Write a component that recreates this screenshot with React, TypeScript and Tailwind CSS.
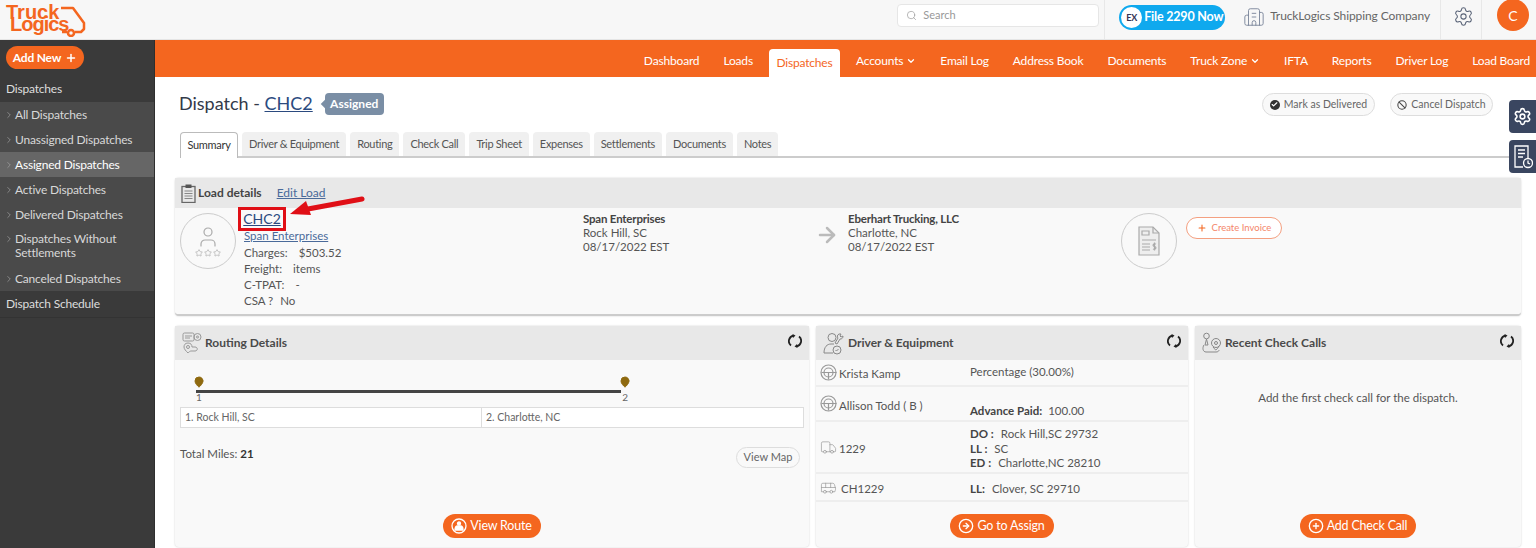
import { Building2, Check, ChevronDown, ChevronRight, Ban, Plus, Search, Settings, ArrowRight, MapPin, User, Star, Truck, Bus, CircleArrowRight, CirclePlus } from "lucide-react"

const navItems = [
  { label: "Dashboard" },
  { label: "Loads" },
  { label: "Dispatches", active: true },
  { label: "Accounts", menu: true },
  { label: "Email Log" },
  { label: "Address Book" },
  { label: "Documents" },
  { label: "Truck Zone", menu: true },
  { label: "IFTA" },
  { label: "Reports" },
  { label: "Driver Log" },
  { label: "Load Board" },
]

const sideItems = [
  { label: "All Dispatches" },
  { label: "Unassigned Dispatches" },
  { label: "Assigned Dispatches", active: true },
  { label: "Active Dispatches" },
  { label: "Delivered Dispatches" },
  { label: "Dispatches Without Settlements", tall: true },
  { label: "Canceled Dispatches" },
]

const tabs = ["Driver & Equipment", "Routing", "Check Call", "Trip Sheet", "Expenses", "Settlements", "Documents", "Notes"]

function Sync() {
  return (
    <svg width="14" height="14" viewBox="0 0 14 14" fill="none" stroke="#222" strokeWidth="1.8">
      <path d="M3 11.5A5.6 5.6 0 0 1 5.5 1.6" />
      <path d="M11 2.5A5.6 5.6 0 0 1 8.5 12.4" />
      <path d="M4.5 0 7.5 1.6 5 4Z" fill="#222" stroke="none" />
      <path d="M9.5 14 6.5 12.4 9 10Z" fill="#222" stroke="none" />
    </svg>
  )
}

function Wheel() {
  return (
    <svg width="17" height="17" viewBox="0 0 17 17" fill="none" stroke="#999" strokeWidth="1.2" className="shrink-0">
      <circle cx="8.5" cy="8.5" r="7.5" />
      <circle cx="8.5" cy="8.5" r="4.5" />
      <path d="M1.5 8.5h15M8.5 8.5v7" />
    </svg>
  )
}

function RoutingIcon() {
  return (
    <svg width="20" height="22" viewBox="0 0 20 22" fill="none" stroke="#999" strokeWidth="1">
      <rect x="1" y="1" width="11" height="8" rx="1.5" />
      <path d="M3 4h7M3 6h5" />
      <circle cx="15.5" cy="5" r="3.5" />
      <circle cx="15.5" cy="5" r="1" />
      <path d="M6 11c-3 0-4 2-4 4 0 2 2 4 4 6 1-1 2-2 3-2h4c3 0 3-4 0-4h-3c0-2-1-4-4-4Z" />
      <circle cx="6" cy="15" r="1.5" />
    </svg>
  )
}

function DriverIcon() {
  return (
    <svg width="22" height="23" viewBox="0 0 22 23" fill="none" stroke="#888" strokeWidth="1">
      <circle cx="9" cy="5.5" r="4" />
      <path d="M1 21c0-6 3-9 7-9h3" />
      <path d="M1 21h9" />
      <path d="M16 2c-2 1-2 3-1 4l-3 5 2 1 3-5c2 0 3-1 3-3l-2 1-1-1 1-2Z" />
      <circle cx="14" cy="18" r="4" />
      <path d="M12.5 18l1 1 2-2" />
    </svg>
  )
}

function CheckCallIcon() {
  return (
    <svg width="20" height="22" viewBox="0 0 20 22" fill="none" stroke="#888" strokeWidth="1">
      <circle cx="4.5" cy="4" r="2.8" />
      <path d="M4.5 7 3 13h3Z" />
      <circle cx="14" cy="11" r="4.5" />
      <circle cx="14" cy="11" r="1.5" />
      <path d="M11 15c2 2 2 3 3 3 1-1 2-2 3-4" />
      <path d="M2 13c-2 3-1 7 2 7h10c2 0 3-1 3-2" />
    </svg>
  )
}

function Clipboard() {
  return (
    <svg width="15" height="19" viewBox="0 0 15 19" className="shrink-0">
      <rect x="1" y="2.5" width="13" height="16" fill="#e8e8e8" stroke="#666" strokeWidth="1.3" />
      <rect x="4.5" y="0.5" width="6" height="3.5" fill="#555" />
      <path d="M3.5 7h8M3.5 9.5h8M3.5 12h8M3.5 14.5h8" stroke="#888" strokeWidth="1" />
    </svg>
  )
}

function InvoiceIcon() {
  return (
    <svg width="24" height="30" viewBox="0 0 24 30" fill="none" stroke="#aaa" strokeWidth="1.2">
      <path d="M2 1h14l6 6v22H2Z" fill="#eee" />
      <path d="M16 1v6h6" />
      <path d="M5 5h7v4H5Z" />
      <path d="M5 14h14M5 18h8M5 21h8M5 24h8" />
      <path d="M19 18c-3-1-4 2-1.500 2.500s1.500 3.500-1.500 2.500M17.500 16.500v8" />
    </svg>
  )
}

function LogIcon() {
  return (
    <svg width="20" height="24" viewBox="0 0 20 24" fill="none" stroke="#fff" strokeWidth="1.3">
      <path d="M10 22H2V1h13v12" />
      <path d="M5 5h7M5 8.500h7M5 12h5" />
      <circle cx="15" cy="18" r="4.500" fill="#3a4660" />
      <path d="M15 15.500V18l2 1" />
    </svg>
  )
}

function Logo() {
  return (
    <div className="relative w-[90px] h-[39px] shrink-0 pt-[4px] text-[#f4661f] font-bold font-['Liberation_Sans',sans-serif]">
      <div className="pl-[6px] text-[20px] leading-[16px]">Truck</div>
      <div className="pl-[10px] -mt-[4px] text-[20px] leading-[16px] tracking-[-1px]">Logics</div>
      <svg className="absolute left-[52px] top-[5px]" width="34" height="32" viewBox="0 0 34 32" fill="none" stroke="#f4661f" strokeWidth="2.500" strokeLinejoin="round">
        <path d="M9 3h12l11 15v6l-3 3h-6M15 27h-5" />
        <circle cx="19" cy="28" r="3" />
      </svg>
    </div>
  )
}

function OrangeButton({ icon, label }: { icon: React.ReactNode; label: string }) {
  return (
    <button className="h-6 rounded-full bg-[#f4661f] text-white text-[12.5px] tracking-[-0.2px] flex items-center gap-[3px] pl-2 pr-[9px]">
      {icon}
      {label}
    </button>
  )
}

function PanelHead({ icon, title }: { icon: React.ReactNode; title: string }) {
  return (
    <div className="h-[34px] bg-[#e8e8e8] flex items-center justify-between pl-[7px] pr-[7px]">
      <div className="flex items-center gap-[3px] text-[12px] font-bold text-[#4a4a4a]">
        {icon}
        {title}
      </div>
      <div className="-mt-[5px]">
        <Sync />
      </div>
    </div>
  )
}

export default function App() {
  return (
    <div className="relative w-[1536px] h-[548px] overflow-hidden bg-white text-[#555] font-['Lato','Liberation_Sans',sans-serif]">
      {/* top bar */}
      <header className="h-[40px] bg-[#f7f7f7] border-b border-[#e5e5e5] flex items-start">
        <Logo />
        <div className="ml-auto mt-[4px] w-[202px] h-[23px] bg-white border border-[#e6e6e6] rounded flex items-center gap-[6px] pl-[8px] text-[11px] text-[#999]">
          <Search size={11} strokeWidth={1.5} />
          Search
        </div>
        <div className="ml-[5px] w-px h-[39px] bg-[#e8e8e8]" />
        <button className="ml-[14px] mt-[5px] w-[106px] h-[25px] rounded-full bg-[#0fa9ee] text-white text-[12.5px] tracking-[-0.2px] font-bold whitespace-nowrap flex items-center gap-[2px] pl-[2px]">
          <span className="w-[21px] h-[21px] rounded-full bg-white text-[#335] text-[9px] font-bold flex items-center justify-center">EX</span>
          File 2290 Now
        </button>
        <Building2 className="ml-[18px] mt-[6px] text-[#7a8499]" size={22} strokeWidth={1} />
        <span className="ml-[5px] mt-[7px] text-[12px] tracking-[-0.1px] leading-[18px] whitespace-nowrap text-[#666]">TruckLogics Shipping Company</span>
        <div className="ml-[10px] w-px h-[39px] bg-[#e8e8e8]" />
        <Settings className="ml-[12px] mt-[6px] text-[#5a6478]" size={21} strokeWidth={1.2} />
        <div className="ml-[7px] w-px h-[39px] bg-[#e8e8e8]" />
        <div className="ml-[15px] mr-[7px] -mt-px w-[32px] h-[32px] rounded-full bg-[#f4661f] text-white text-[14px] flex items-center justify-center">C</div>
      </header>

      <div className="flex h-[508px]">
        {/* sidebar */}
        <aside className="w-[155px] shrink-0 bg-[#3a3a3a] text-[#ddd] text-[12px] tracking-[-0.2px] border-r border-[#2e2e2e]">
          <div className="h-[36px] pt-[6px] pl-[6px]">
            <button className="w-[78px] h-[23px] rounded-full bg-[#f4661f] text-white text-[12px] font-bold flex items-center justify-center gap-[4px]">
              Add New
              <Plus size={12} strokeWidth={3} />
            </button>
          </div>
          <div className="h-[26px] flex items-center pl-[6px]">Dispatches</div>
          <div className="bg-[#4a4a4a] h-[189px]">
            {sideItems.map((item) => (
              <div
                key={item.label}
                className={`flex pl-[4px] pr-2 ${item.tall ? "items-start h-[39px] pt-[5px] leading-[14px]" : "items-center h-[25px]"} ${item.active ? "bg-[#666] text-white" : "text-[#d8d8d8]"}`}
              >
                <ChevronRight className={`shrink-0 text-[#aaa] mr-px ${item.tall ? "mt-[2px]" : ""}`} size={10} strokeWidth={1.5} />
                <span>{item.label}</span>
              </div>
            ))}
          </div>
          <div className="h-[27px] flex items-center pl-[6px] border-b border-[#333]">Dispatch Schedule</div>
        </aside>

        <div className="flex-1 min-w-0">
          {/* orange nav */}
          <nav className="h-[37px] bg-[#f4661f] flex items-end justify-end pr-[6px] gap-[24px] text-white text-[12px] tracking-[-0.18px]">
            {navItems.map((n) =>
              n.active ? (
                <div key={n.label} className="h-[28px] -mx-[8px] w-[71px] bg-white text-[#f4661f] rounded-t flex items-center justify-center">
                  {n.label}
                </div>
              ) : (
                <div key={n.label} className="h-[37px] flex items-center gap-[3px] pt-[4px]">
                  {n.label}
                  {n.menu && <ChevronDown size={10} strokeWidth={3} />}
                </div>
              ),
            )}
          </nav>

          <main className="pl-[20px] pr-[15px]">
            {/* title row */}
            <div className="h-[55px] flex items-center pl-[4px] pr-[28px]">
              <h1 className="-mt-[3px] text-[18px] text-[#333a4a]">
                Dispatch - <a className="underline text-[#2b4a7f]">CHC2</a>
              </h1>
              <span className="ml-[12px] -mt-px relative h-[22px] w-[59px] rounded-sm bg-[#7a8ea5] text-white text-[12px] font-bold flex items-center justify-center">
                <span className="absolute -left-[3px] top-[8px] w-[6px] h-[6px] rotate-45 bg-[#7a8ea5]" />
                Assigned
              </span>
              <button className="ml-auto h-[23px] w-[113px] rounded-full border border-[#ddd] bg-[#f9f9f9] text-[10.5px] text-[#666] flex items-center justify-center gap-[4px]">
                <span className="w-[10px] h-[10px] rounded-full bg-[#333] text-white flex items-center justify-center">
                  <Check size={7} strokeWidth={4} />
                </span>
                Mark as Delivered
              </button>
              <button className="ml-[15px] h-[23px] w-[103px] rounded-full border border-[#ddd] bg-[#f9f9f9] text-[10.5px] text-[#666] flex items-center justify-center gap-[4px]">
                <Ban size={10} strokeWidth={2.5} className="text-[#444]" />
                Cancel Dispatch
              </button>
            </div>

            {/* tabs */}
            <div className="h-[26px] ml-[5px] -mr-[15px] border-b-2 border-[#ccc] flex items-end gap-[4px] text-[11px] tracking-[-0.3px] text-[#555]">
              <div className="h-[26px] -mb-[2px] w-[58px] bg-white border border-[#bbb] border-b-0 rounded-t text-[#333] flex items-center justify-center">Summary</div>
              {tabs.map((t) => (
                <div key={t} className="h-[24px] px-[7px] bg-[#f0f0f0] rounded-t flex items-center">{t}</div>
              ))}
            </div>

            {/* load details */}
            <section className="mt-[20px] h-[138px] bg-[#f9f9f9] rounded-sm border-b-2 border-[#ccc] shadow-[0_0_2px_#ccc] relative">
              <div className="h-[30px] bg-[#e8e8e8] flex items-center pl-[6px] text-[12px]">
                <Clipboard />
                <span className="ml-[2px] font-bold text-[#444]">Load details</span>
                <a className="ml-[15px] underline text-[#4a6a9a]">Edit Load</a>
              </div>
              <div className="flex items-start pl-[5px]">
                <div className="mt-[5px] w-[56px] h-[56px] shrink-0 rounded-full border border-[#ccc] flex flex-col items-center justify-center text-[#aaa]">
                  <User size={24} strokeWidth={1.2} />
                  <div className="flex gap-[1px]">
                    <Star size={8} />
                    <Star size={8} />
                    <Star size={8} />
                  </div>
                </div>
                <div className="ml-[8px] w-[339px] shrink-0 text-[11.5px] leading-[16px] text-[#555]">
                  <div className="ml-[-6px] -mt-[1px] w-[48px] h-[24px] border-[3px] border-[#e00f16] flex items-center justify-center text-[14px] underline text-[#2b4a7f]">CHC2</div>
                  <a className="block -mt-[3px] underline text-[#4a6a9a]">Span Enterprises</a>
                  <div className="mt-px"><span className="mr-[11px]">Charges:</span>$503.52</div>
                  <div><span className="mr-[11px]">Freight:</span>items</div>
                  <div><span className="mr-[11px]">C-TPAT:</span>-</div>
                  <div><span className="mr-[7px]">CSA ?</span>No</div>
                </div>
                <div className="w-[232px] shrink-0 pt-[4px] text-[11.5px] leading-[14px]">
                  <div className="font-bold tracking-[-0.2px] text-[#444]">Span Enterprises</div>
                  <div>Rock Hill, SC</div>
                  <div>08/17/2022 EST</div>
                </div>
                <ArrowRight className="mt-[15px] w-[24px] shrink-0 text-[#bbb]" size={24} strokeWidth={2.5} />
                <div className="ml-[9px] w-[273px] shrink-0 pt-[4px] text-[11.5px] leading-[14px]">
                  <div className="font-bold tracking-[-0.2px] text-[#444]">Eberhart Trucking, LLC</div>
                  <div>Charlotte, NC</div>
                  <div>08/17/2022 EST</div>
                </div>
                <div className="mt-[5px] w-[56px] h-[56px] shrink-0 rounded-full border border-[#ccc] flex items-center justify-center">
                  <InvoiceIcon />
                </div>
                <button className="ml-[9px] mt-[9px] w-[96px] h-[22px] rounded-full border border-[#f4a081] bg-white text-[9.5px] text-[#f4866a] flex items-center justify-center gap-[5px]">
                  <Plus size={10} strokeWidth={2.5} className="text-[#f4661f]" />
                  Create Invoice
                </button>
              </div>
              {/* red annotation arrow */}
              <svg className="absolute left-[113px] top-[18px]" width="78" height="24" viewBox="0 0 78 24" fill="none">
                <path d="M74 3 20 13" stroke="#e00f16" strokeWidth="5" strokeLinecap="round" />
                <path d="M2 18 18 5 23 19Z" fill="#e00f16" />
              </svg>
            </section>

            {/* panels */}
            <div className="mt-[10px] flex gap-[7px]">
              <section className="w-[634px] h-[221px] bg-[#f9f9f9] rounded-sm shadow-[0_0_2px_#ccc] flex flex-col">
                <PanelHead icon={<RoutingIcon />} title="Routing Details" />
                <div className="pl-[5px] pr-[5px] flex-1">
                  <div className="ml-[16px] mt-[30px] w-[425px] h-[3px] bg-[#444] relative">
                    <MapPin size={12} fill="#8f6a10" strokeWidth={2} className="absolute -left-[3px] -top-[14px] text-[#8f6a10]" />
                    <MapPin size={12} fill="#8f6a10" strokeWidth={2} className="absolute -right-[10px] -top-[14px] text-[#8f6a10]" />
                  </div>
                  <div className="ml-[16px] -mt-[2px] w-[432px] flex justify-between text-[10px] leading-[13px] text-[#666]">
                    <span>1</span>
                    <span>2</span>
                  </div>
                  <div className="mt-[3px] h-[21px] bg-white border border-[#ddd] flex text-[10.5px] text-[#666]">
                    <div className="w-[301px] flex items-center pl-[4px] border-r border-[#ddd]">1. Rock Hill, SC</div>
                    <div className="flex items-center pl-[4px]">2. Charlotte, NC</div>
                  </div>
                  <div className="mt-[18px] flex items-start justify-between pr-[4px] text-[11.5px]">
                    <span className="mt-[-1px]">Total Miles: <b className="text-[#333]">21</b></span>
                    <button className="mt-px h-[21px] w-[64px] rounded-full border border-[#ddd] bg-[#f9f9f9] text-[11px] text-[#666]">View Map</button>
                  </div>
                </div>
                <div className="h-[33px] flex justify-center">
                  <OrangeButton
                    icon={
                      <svg width="16" height="16" viewBox="0 0 16 16" fill="none" stroke="#fff" strokeWidth="1.300">
                        <circle cx="8" cy="8" r="7" />
                        <path d="M4 12c0-3 1-4 2.500-4h3c1.500 0 2.500 1 2.500 4Z" fill="#fff" />
                        <circle cx="8" cy="5.500" r="1.500" fill="#fff" />
                      </svg>
                    }
                    label="View Route"
                  />
                </div>
              </section>

              <section className="w-[372px] h-[221px] bg-[#f9f9f9] rounded-sm shadow-[0_0_2px_#ccc] flex flex-col">
                <PanelHead icon={<DriverIcon />} title="Driver & Equipment" />
                <div className="text-[11.5px] text-[#555]">
                  <div className="h-[27px] border-b-2 border-[#eee] flex">
                    <div className="w-[154px] flex items-center gap-[2px] pl-[4px]"><Wheel /><span className="mt-[3px]">Krista Kamp</span></div>
                    <div className="pt-[3px]">Percentage (30.00%)</div>
                  </div>
                  <div className="h-[35px] border-b-2 border-[#eee] flex">
                    <div className="w-[154px] flex items-center gap-[2px] pl-[4px]"><Wheel /><span className="mt-[4px]">Allison Todd ( B )</span></div>
                    <div className="pt-[15px]"><b className="mr-[6px] text-[#444]">Advance Paid:</b>100.00</div>
                  </div>
                  <div className="h-[52px] border-b-2 border-[#eee] flex">
                    <div className="w-[154px] flex items-center gap-[2px] pl-[4px]"><Truck size={17} strokeWidth={1} className="text-[#999]" /><span className="mt-[3px]">1229</span></div>
                    <div className="pt-[5px] leading-[14.5px]">
                      <div><b className="mr-[7px] text-[#444]">DO :</b>Rock Hill,SC 29732</div>
                      <div><b className="mr-[7px] text-[#444]">LL :</b>SC</div>
                      <div><b className="mr-[7px] text-[#444]">ED :</b>Charlotte,NC 28210</div>
                    </div>
                  </div>
                  <div className="h-[28px] border-b-2 border-[#eee] flex">
                    <div className="w-[154px] flex items-center gap-[4px] pl-[4px]"><Bus size={17} strokeWidth={1} className="text-[#999]" /><span className="mt-[3px]">CH1229</span></div>
                    <div className="pt-[6px]"><b className="mr-[7px] text-[#444]">LL:</b>Clover, SC 29710</div>
                  </div>
                </div>
                <div className="mt-auto h-[33px] flex justify-center">
                  <OrangeButton icon={<CircleArrowRight size={16} />} label="Go to Assign" />
                </div>
              </section>

              <section className="flex-1 h-[221px] bg-[#f9f9f9] rounded-sm shadow-[0_0_2px_#ccc] flex flex-col">
                <PanelHead icon={<CheckCallIcon />} title="Recent Check Calls" />
                <p className="mt-[29px] text-center text-[11.5px] text-[#555]">Add the first check call for the dispatch.</p>
                <div className="mt-auto h-[33px] flex justify-center">
                  <OrangeButton icon={<CirclePlus size={16} />} label="Add Check Call" />
                </div>
              </section>
            </div>
          </main>
        </div>
      </div>

      {/* floating side buttons */}
      <div className="absolute right-0 top-[100px] w-[27px] h-[33px] bg-[#3a4660] rounded-l flex items-center justify-center text-white">
        <Settings size={19} strokeWidth={2} />
      </div>
      <div className="absolute right-0 top-[140px] w-[27px] h-[33px] bg-[#3a4660] rounded-l flex items-center justify-center text-white">
        <LogIcon />
      </div>
    </div>
  )
}
